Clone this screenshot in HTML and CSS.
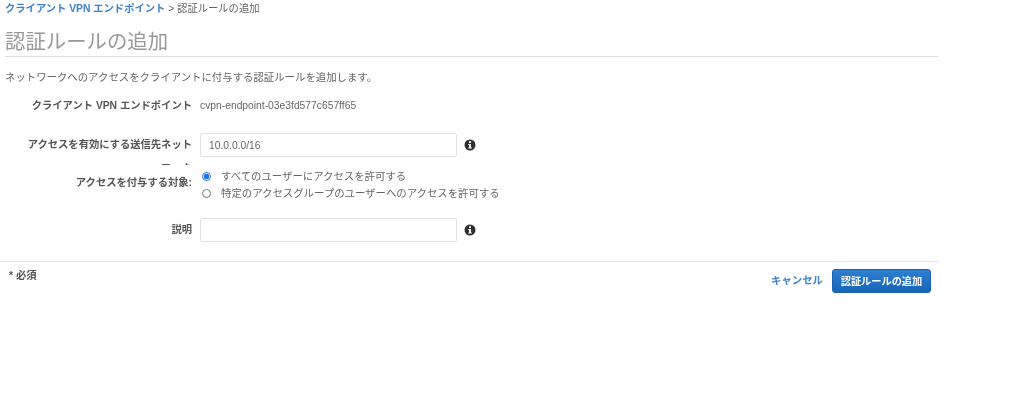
FILE: index.html
```html
<!DOCTYPE html>
<html lang="ja">
<head>
    <meta charset="UTF-8">
    <meta name="viewport" content="width=device-width, initial-scale=1.0">
    <title>認証ルールの追加</title>
    <link rel="stylesheet" href="styles.css">
</head>
<body>

<div class="page">
    <div class="breadcrumb">
        <a href="#">クライアント VPN エンドポイント</a> <span class="sep">&gt;</span> 認証ルールの追加
    </div>
    <h1 class="title">認証ルールの追加</h1>
    <p class="intro">ネットワークへのアクセスをクライアントに付与する認証ルールを追加します。</p>

    <div class="row row-endpoint">
        <div class="label">クライアント VPN エンドポイント</div>
        <div class="value">cvpn-endpoint-03e3fd577c657ff65</div>
    </div>

    <div class="row row-network">
        <div class="label label-clipped">アクセスを有効にする送信先ネットワーク</div>
        <div class="field">
            <input class="text-input" type="text" value="10.0.0.0/16">
            <svg class="info" viewBox="0 0 12 12"><circle cx="6" cy="6" r="5.5" fill="#2f2f2f"/><rect x="5" y="2.2" width="2" height="1.8" fill="#fff"/><path d="M4.3 5h2.7v3.6h.8v1H4.3v-1h.8V6h-.8z" fill="#fff"/></svg>
        </div>
    </div>

    <div class="row row-access">
        <div class="label label-access">アクセスを付与する対象:</div>
        <div class="radios">
            <label class="radio"><input type="radio" name="access" checked> すべてのユーザーにアクセスを許可する</label>
            <label class="radio"><input type="radio" name="access"> 特定のアクセスグループのユーザーへのアクセスを許可する</label>
        </div>
    </div>

    <div class="row row-desc">
        <div class="label">説明</div>
        <div class="field">
            <input class="text-input" type="text">
            <svg class="info" viewBox="0 0 12 12"><circle cx="6" cy="6" r="5.5" fill="#2f2f2f"/><rect x="5" y="2.2" width="2" height="1.8" fill="#fff"/><path d="M4.3 5h2.7v3.6h.8v1H4.3v-1h.8V6h-.8z" fill="#fff"/></svg>
        </div>
    </div>

    <div class="footer">
        <div class="required">* 必須</div>
        <div class="actions">
            <a class="cancel" href="#">キャンセル</a>
            <button class="primary">認証ルールの追加</button>
        </div>
    </div>
</div>

</body>
</html>
```

FILE: styles.css
```css
body {
    margin: 0;
    font-family: "Liberation Sans", "Noto Sans CJK JP", sans-serif;
    font-size: 10.4px;
    color: #555;
    background-color: #fff;
}
.page {
    width: 938px;
    filter: blur(0.35px);
}
.breadcrumb {
    padding: 1px 0 0 5px;
    height: 15px;
    line-height: 16px;
    font-size: 10.3px;
    color: #666;
}
.breadcrumb a {
    color: #3b82cf;
    font-weight: bold;
    text-decoration: none;
}
.title {
    margin: 0 0 0 5px;
    padding: 14px 0 1px;
    height: 25px;
    line-height: 25px;
    font-size: 20.4px;
    font-weight: normal;
    color: #999;
    border-bottom: 1px solid #ddd;
}
.intro {
    margin: 0;
    padding: 13px 0 0 5px;
    height: 16px;
    line-height: 16px;
    color: #666;
}
.row {
    display: grid;
    grid-template-columns: 172px 1fr;
    column-gap: 8px;
    padding-left: 20px;
}
.row-endpoint {
    margin-top: 12px;
    height: 16px;
    line-height: 16px;
}
.row-network {
    margin-top: 19px;
}
.row-access {
    margin-top: 1px;
}
.row-desc {
    margin-top: 16px;
}
.label {
    text-align: right;
    font-size: 10.3px;
    font-weight: bold;
    color: #555;
    line-height: 24px;
}
.row-endpoint .label {
    line-height: 16px;
    white-space: nowrap;
}
.label-clipped {
    height: 32px;
    overflow: hidden;
}
.label-access {
    padding-top: 5px;
}
.value {
    font-size: 10.3px;
    color: #666;
}
.field {
    display: flex;
    align-items: center;
    gap: 7px;
    height: 24px;
}
.text-input {
    box-sizing: border-box;
    width: 257px;
    height: 24px;
    margin: 0;
    padding: 0 8px;
    font-family: inherit;
    font-size: 10.3px;
    color: #666;
    border: 1px solid #e0e0e0;
    border-radius: 2px;
    outline: none;
}
.info {
    width: 12px;
    height: 12px;
}
.radios {
    padding-top: 2px;
    color: #666;
}
.radio {
    display: flex;
    align-items: center;
    gap: 10px;
    height: 17px;
    line-height: 16px;
}
.radio input {
    width: 9px;
    height: 9px;
    margin: 0 0 0 2px;
    accent-color: #1a73e8;
}
.footer {
    display: flex;
    justify-content: space-between;
    align-items: flex-start;
    margin-top: 19px;
    padding: 7px 7px 0 9px;
    border-top: 1px solid #e6e6e6;
}
.required {
    padding-top: 1px;
    line-height: 12px;
    font-size: 10.4px;
    font-weight: bold;
}
.actions {
    display: flex;
    align-items: center;
    gap: 9px;
}
.cancel {
    padding-bottom: 3px;
    color: #3b82cf;
    font-weight: bold;
    text-decoration: none;
}
.primary {
    box-sizing: border-box;
    width: 99px;
    height: 24px;
    padding: 0 0 2px;
    font-family: inherit;
    font-size: 10.2px;
    font-weight: bold;
    color: #fff;
    background: linear-gradient(#2e7fd0, #1565b8);
    border: 1px solid #1b62ae;
    border-radius: 3px;
}
```
